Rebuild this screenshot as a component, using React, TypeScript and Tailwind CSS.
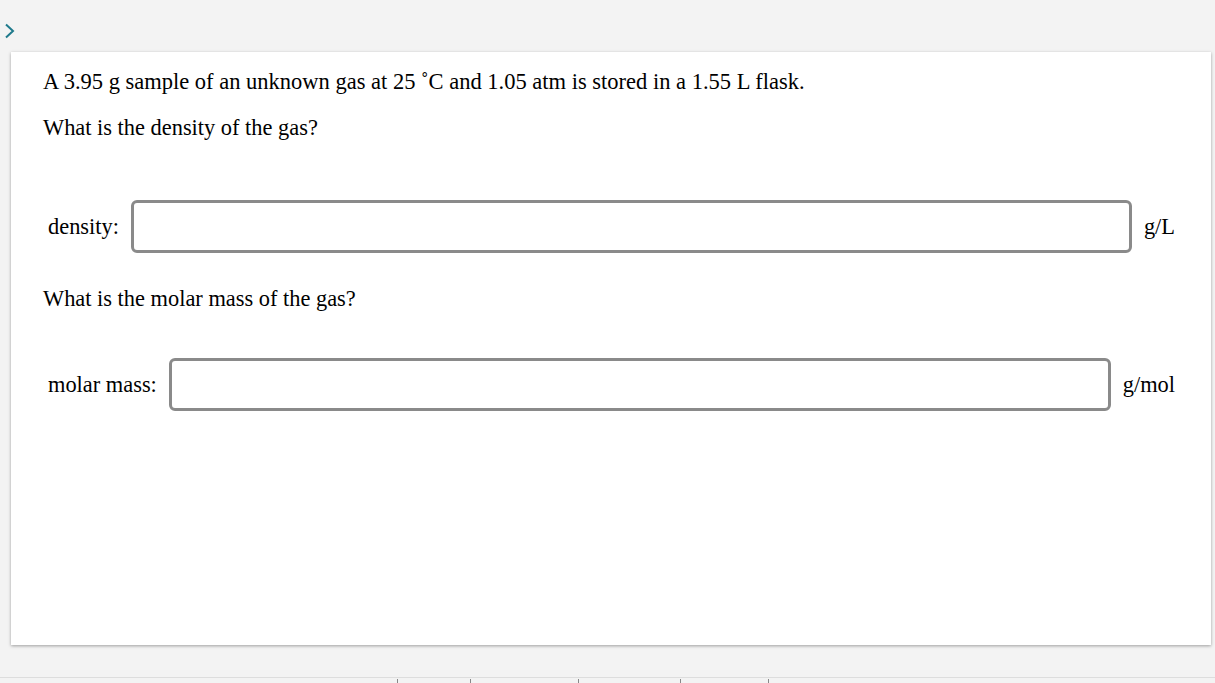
import React from 'react'

const serif = { fontFamily: '"Liberation Serif", "Times New Roman", serif' }

function AnswerRow({ label, unit }: { label: string; unit: string }) {
  return (
    <div className="flex items-center pl-[5px] text-[22.4px] text-black">
      <span className="whitespace-nowrap">{label}</span>
      <input
        type="text"
        className="mx-[12px] h-[53px] flex-1 rounded-[6px] border-[3px] border-[#8a8a8a] bg-white outline-none"
      />
      <span className="whitespace-nowrap">{unit}</span>
    </div>
  )
}

export default function App() {
  const ticks = [397, 470, 578, 680, 768]
  return (
    <div className="flex h-[683px] w-full flex-col overflow-hidden bg-[#f3f3f3]" style={serif}>
      <div className="h-[52px] shrink-0 pl-[4px] pt-[23px]">
        <svg width="12" height="16" viewBox="0 0 12 16" fill="none">
          <path d="M2 1.5 L9 8 L2 14.5" stroke="#1f7a8c" strokeWidth="2" />
        </svg>
      </div>

      <div className="ml-[11px] h-[593px] w-[1200px] shrink-0 bg-white pl-[32px] pr-[36px] pt-[16px] shadow-[0_1px_3px_rgba(0,0,0,0.35)]">
        <p className="text-[22.5px] leading-[28px] text-black">
          A 3.95 g sample of an unknown gas at 25 ˚C and 1.05 atm is stored in a 1.55 L flask.
        </p>
        <p className="mt-[18px] text-[22.4px] leading-[28px] text-black">What is the density of the gas?</p>

        <div className="mt-[58px]">
          <AnswerRow label="density:" unit="g/L" />
        </div>

        <p className="mt-[32px] text-[22.4px] leading-[28px] text-black">What is the molar mass of the gas?</p>

        <div className="mt-[45px]">
          <AnswerRow label="molar mass:" unit="g/mol" />
        </div>
      </div>

      <div className="mt-[32px] h-px w-full shrink-0 bg-[#dddddd]" />
      <div className="relative h-[6px] w-full shrink-0">
        {ticks.map((x) => (
          <span key={x} className="absolute top-[1px] h-[5px] w-px bg-[#888]" style={{ left: x }} />
        ))}
      </div>
    </div>
  )
}
